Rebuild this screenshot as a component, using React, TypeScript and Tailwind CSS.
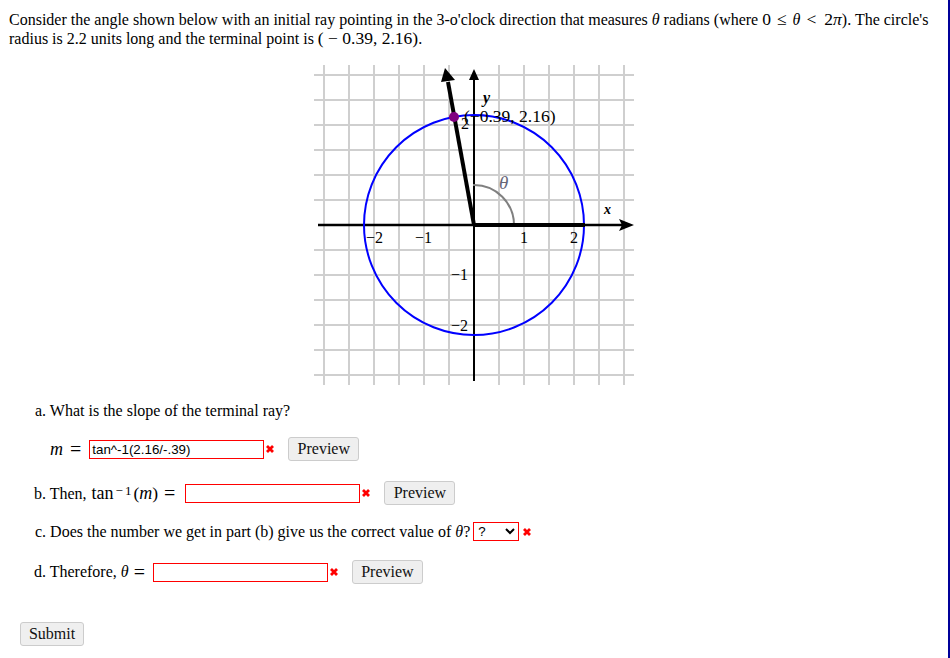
import React from 'react';

const mathFont = "font-['Liberation_Serif',serif] italic";
const mathSize = 'text-[17.5px]';

const gridX = [324, 349, 374, 399, 424, 449, 499, 524, 549, 574, 599, 624];
const gridY = [75, 100, 125, 150, 175, 200, 250, 275, 300, 325, 350, 375];

const Graph = () => (
  <svg width="320" height="320" viewBox="314 65 320 320" className="block">
    {gridX.map((x) => (
      <line key={x} x1={x} y1="65" x2={x} y2="385" stroke="#cfcfcf" strokeWidth="2" />
    ))}
    {gridY.map((y) => (
      <line key={y} x1="314" y1={y} x2="634" y2={y} stroke="#cfcfcf" strokeWidth="2" />
    ))}

    {/* axes */}
    <line x1="318" y1="225" x2="624" y2="225" stroke="#000" strokeWidth="2.5" />
    <line x1="474" y1="381" x2="474" y2="78" stroke="#000" strokeWidth="2" />
    <polygon points="474,69 469,80 479,80" fill="#000" />
    <polygon points="634,225 619,219 622,225 619,231" fill="#000" />

    <circle cx="474" cy="225" r="110" fill="none" stroke="#0000ff" strokeWidth="2" />

    {/* angle arc */}
    <path d="M514 225 A40 40 0 0 0 474 185 L473 185" fill="none" stroke="#808080" strokeWidth="2" />

    {/* initial and terminal ray */}
    <line x1="474" y1="225" x2="585" y2="225" stroke="#000" strokeWidth="4" />
    <line x1="474" y1="225" x2="448" y2="82" stroke="#000" strokeWidth="4" />
    <polygon points="445,68 441,82 455,80" fill="#000" />
    <circle cx="454" cy="117" r="5" fill="#800080" />

    <g fontFamily="'Liberation Serif', serif" fontSize="16" fill="#000">
      <text x="366" y="243">−2</text>
      <text x="415" y="243">−1</text>
      <text x="520" y="243">1</text>
      <text x="570" y="243">2</text>
      <text x="451" y="280">−1</text>
      <text x="451" y="331">−2</text>
      <text x="461" y="129">2</text>
      <text x="464" y="122" fontSize="17.5">(−0.39, 2.16)</text>
      <text x="483" y="103" fontStyle="italic" fontWeight="bold">y</text>
      <text x="604" y="214" fontStyle="italic" fontSize="14" fontWeight="bold">x</text>
      <text x="499" y="189" fontStyle="italic" fontSize="19" fill="#667">θ</text>
    </g>
  </svg>
);

const Preview = () => (
  <button className="h-[24px] w-[71px] ml-[14px] rounded-[3px] border border-[#cccccc] bg-[#efefef] text-[16px] text-[#111111] leading-none">
    Preview
  </button>
);

const Flag = ({ className = 'ml-[2px]' }: { className?: string }) => (
  <svg width="8" height="8" viewBox="0 0 8 8" className={`${className} shrink-0`}>
    <path d="M1 1 L7 7 M7 1 L1 7" stroke="#ff0000" strokeWidth="2.8" fill="none" />
  </svg>
);

const AnswerBox = ({ value = '' }: { value?: string }) => (
  <input
    defaultValue={value}
    className="h-[19px] w-[175px] border border-[#ff0000] bg-white px-[2px] font-['Liberation_Sans',sans-serif] text-[13.33px] text-black outline-none"
  />
);

export default function App() {
  return (
    <div className="h-[658px] w-[950px] overflow-hidden bg-white font-['Liberation_Serif',serif] text-[16px] leading-[18px] text-black">
      <div className="h-full w-full border-r-2 border-[#000099] pl-[9px] pr-[9px] pt-[10px]">
        <p>
          Consider the angle shown below with an initial ray pointing in the 3-o'clock direction that measures{' '}
          <span className={mathFont}>θ</span> radians (where{' '}
          <span className={mathSize}>0</span>
          <span className={`${mathSize} mx-[6px]`}>≤</span>
          <span className={mathFont}>θ</span>
          <span className={`${mathSize} mx-[6px]`}>&lt;</span>
          <span className={`${mathSize} ml-[2px]`}>2</span>
          <span className={`${mathFont} ${mathSize}`}>π</span>). The circle's radius is 2.2 units long and the terminal point is{' '}
          <span className={mathSize}>( − 0.39, 2.16)</span>.
        </p>

        <div className="mt-[17px] flex justify-center">
          <Graph />
        </div>

        <div className="mt-[17px] pl-[25px]">
          <p className="ml-[1px]">a. What is the slope of the terminal ray?</p>

          <div className="mt-[17px] flex items-center pl-[16px]">
            <span className={`${mathFont} text-[18px]`}>m</span>
            <span className="ml-[7px] mr-[8px] text-[20px]">=</span>
            <AnswerBox value="tan^-1(2.16/-.39)" />
            <Flag />
            <Preview />
          </div>

          <div className="mt-[20px] flex items-center">
            <span>
              b. Then, <span className="ml-[1px] text-[18px]">tan</span>
            </span>
            <span className="ml-[2px] mb-[6px] text-[13px] leading-none tracking-[2px]">−1</span>
            <span className={mathSize}>
              (<span className={`${mathFont} text-[18px]`}>m</span>)
            </span>
            <span className="ml-[6px] mr-[10px] text-[20px]">=</span>
            <AnswerBox />
            <Flag />
            <Preview />
          </div>

          <div className="mt-[17px] ml-[1px] flex items-center">
            <span>
              c. Does the number we get in part (b) give us the correct value of <span className={mathFont}>θ</span>?
            </span>
            <select className="ml-[3px] h-[19px] w-[46px] border border-[#ff0000] bg-white font-['Liberation_Sans',sans-serif] text-[13.33px] text-black">
              <option>?</option>
            </select>
            <Flag className="ml-[4px]" />
          </div>

          <div className="mt-[19px] flex items-center">
            <span>
              d. Therefore, <span className={mathFont}>θ</span>
            </span>
            <span className="ml-[5px] mr-[8px] text-[20px]">=</span>
            <AnswerBox />
            <Flag />
            <Preview />
          </div>
        </div>

        <button className="mt-[38px] ml-[11px] h-[24px] w-[64px] rounded-[3px] border border-[#cccccc] bg-[#efefef] text-[16px] leading-none text-[#111111]">
          Submit
        </button>
      </div>
    </div>
  );
}
